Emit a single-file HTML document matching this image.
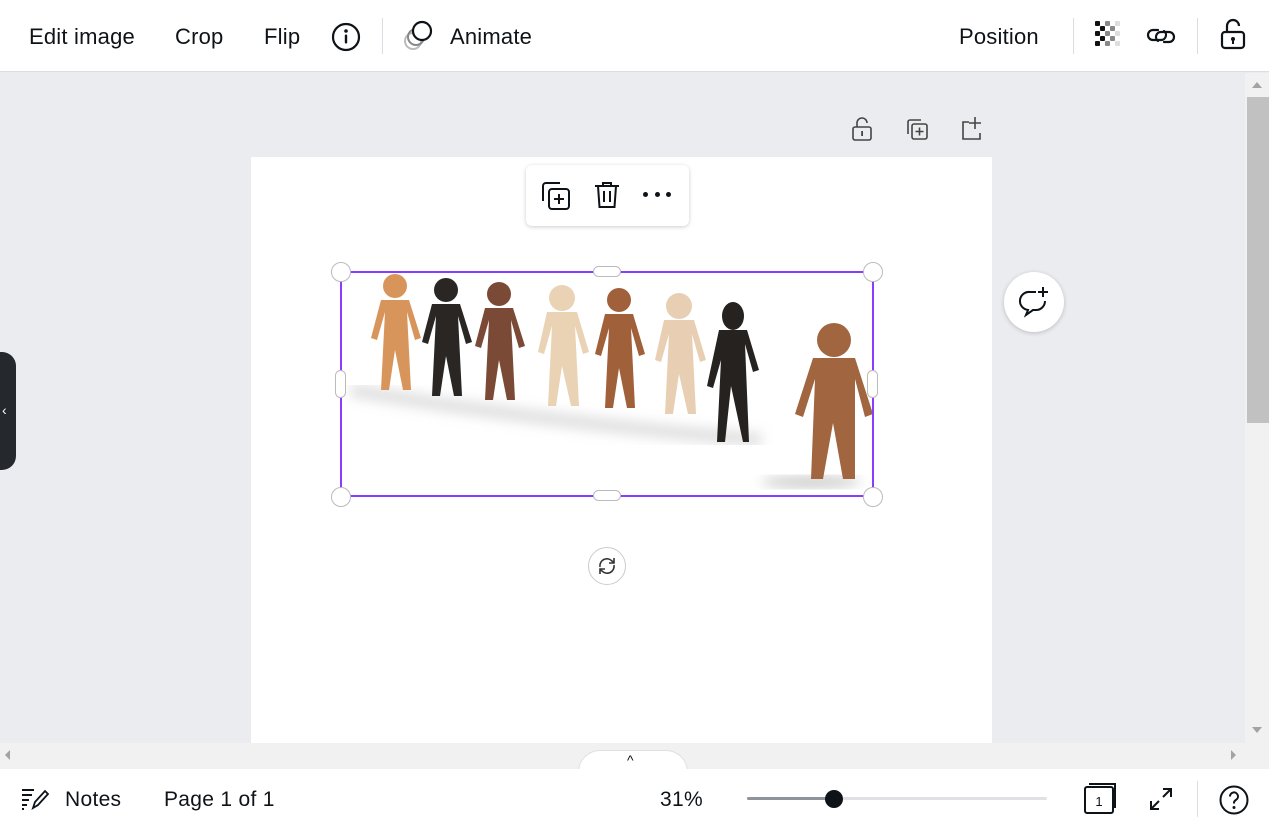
<!DOCTYPE html>
<html><head><meta charset="utf-8"><style>
*{margin:0;padding:0;box-sizing:border-box}
body{width:1269px;height:826px;overflow:hidden;font-family:"Liberation Sans",sans-serif;color:#0e1318;background:#ebecf0;position:relative}
.abs{position:absolute}
.top{left:0;top:0;width:1269px;height:72px;background:#fff;border-bottom:1px solid #dcdde2}
.t{position:absolute;top:24px;font-size:22px;letter-spacing:0.2px}
.sep{position:absolute;width:1px;background:#dcdde2}
.bot{left:0;top:769px;width:1269px;height:57px;background:#fff}
.b{position:absolute;top:788px;font-size:21px;letter-spacing:0.3px}
</style></head><body>
<div class="abs top">
 <div class="t" style="left:29px">Edit image</div>
 <div class="t" style="left:175px">Crop</div>
 <div class="t" style="left:264px">Flip</div>
 <svg class="abs" style="left:330px;top:21px" width="32" height="32" viewBox="0 0 32 32"><circle cx="16" cy="16" r="13" fill="none" stroke="#0e1318" stroke-width="2.2"/><circle cx="16" cy="10" r="1.8" fill="#0e1318"/><rect x="14.8" y="13.5" width="2.4" height="9" rx="1" fill="#0e1318"/></svg>
 <div class="sep" style="left:382px;top:18px;height:36px"></div>
 <svg class="abs" style="left:402px;top:19px" width="36" height="34" viewBox="0 0 36 34"><circle cx="11" cy="22" r="8" fill="none" stroke="#bbb" stroke-width="2"/><circle cx="14" cy="18" r="8" fill="none" stroke="#888" stroke-width="2"/><circle cx="20" cy="12" r="9" fill="#fff" stroke="#0e1318" stroke-width="2.2"/></svg>
 <div class="t" style="left:450px">Animate</div>
 <div class="t" style="left:959px">Position</div>
 <div class="sep" style="left:1073px;top:18px;height:36px"></div>
 <svg class="abs" style="left:1094px;top:20px" width="32" height="32" viewBox="0 0 32 32">
  <g fill="#111"><rect x="1" y="1" width="5" height="5" rx="1"/><rect x="1" y="11" width="5" height="5" rx="1"/><rect x="1" y="21" width="5" height="5" rx="1"/><rect x="6" y="6" width="5" height="5" rx="1"/><rect x="6" y="16" width="5" height="5" rx="1"/></g>
  <g fill="#888"><rect x="11" y="1" width="5" height="5" rx="1"/><rect x="11" y="11" width="5" height="5" rx="1"/><rect x="11" y="21" width="5" height="5" rx="1"/><rect x="16" y="6" width="5" height="5" rx="1"/><rect x="16" y="16" width="5" height="5" rx="1"/></g>
  <g fill="#ddd"><rect x="21" y="1" width="5" height="5" rx="1"/><rect x="21" y="11" width="5" height="5" rx="1"/><rect x="21" y="21" width="5" height="5" rx="1"/></g></svg>
 <svg class="abs" style="left:1145px;top:24px" width="32" height="24" viewBox="0 0 32 24"><path d="M13 6H8a5 5 0 0 0 0 10h8a5 5 0 0 0 3-9" fill="none" stroke="#0e1318" stroke-width="2.2" stroke-linecap="round"/><path d="M19 18h5a5 5 0 0 0 0-10h-8a5 5 0 0 0-3 9" fill="none" stroke="#0e1318" stroke-width="2.2" stroke-linecap="round"/></svg>
 <div class="sep" style="left:1197px;top:18px;height:36px"></div>
 <svg class="abs" style="left:1218px;top:17px" width="30" height="34" viewBox="0 0 30 34"><path d="M9 15V9a6 6 0 0 1 12 0" fill="none" stroke="#0e1318" stroke-width="2.2"/><rect x="4" y="15" width="22" height="16" rx="3" fill="none" stroke="#0e1318" stroke-width="2.2"/><circle cx="15" cy="22" r="2" fill="#0e1318"/><rect x="14" y="22" width="2" height="5" fill="#0e1318"/></svg>
</div>
<div class="abs" style="left:1245px;top:73px;width:24px;height:670px;background:#f1f1f1"></div>
<div class="abs" style="left:1247px;top:97px;width:22px;height:326px;background:#c1c1c1"></div>
<div class="abs" style="left:1252px;top:82px;width:0;height:0;border:5px solid transparent;border-bottom:6px solid #a3a3a3;border-top:0"></div>
<div class="abs" style="left:1252px;top:727px;width:0;height:0;border:5px solid transparent;border-top:6px solid #a3a3a3;border-bottom:0"></div>
<div class="abs" style="left:0;top:743px;width:1269px;height:26px;background:#f1f1f1"></div>
<div class="abs" style="left:5px;top:750px;border:5px solid transparent;border-right:5px solid #a3a3a3;border-left:0"></div>
<div class="abs" style="left:1231px;top:750px;border:5px solid transparent;border-left:5px solid #a3a3a3;border-right:0"></div>
<div class="abs" style="left:578px;top:750px;width:110px;height:22px;background:#fff;border-radius:30px 30px 0 0;border:1px solid #e0e0e0;border-bottom:0"></div>
<div class="abs" style="left:627px;top:752px;font-size:14px">^</div>
<div class="abs" style="left:-14px;top:352px;width:30px;height:118px;background:#25282d;border-radius:14px"></div>
<div class="abs" style="left:2px;top:402px;color:#fff;font-size:14px">‹</div>
<div class="abs" style="left:251px;top:157px;width:741px;height:586px;background:#fff"></div>
<svg class="abs" style="left:850px;top:115px" width="26" height="28" viewBox="0 0 26 28"><path d="M7 12V8a5 5 0 0 1 10 0" fill="none" stroke="#444" stroke-width="1.6"/><rect x="3" y="12" width="18" height="13" rx="2" fill="none" stroke="#444" stroke-width="1.6"/><rect x="11.2" y="16" width="1.8" height="5" fill="#444"/></svg>
<svg class="abs" style="left:904px;top:117px" width="26" height="26" viewBox="0 0 26 26"><path d="M4 17V5a2 2 0 0 1 2-2h11" fill="none" stroke="#444" stroke-width="1.6"/><rect x="8" y="7" width="15" height="15" rx="2" fill="none" stroke="#444" stroke-width="1.6"/><path d="M15.5 10.5v8M11.5 14.5h8" stroke="#444" stroke-width="1.6"/></svg>
<svg class="abs" style="left:958px;top:115px" width="26" height="28" viewBox="0 0 26 28"><path d="M11 7H5v17h17v-6" fill="none" stroke="#444" stroke-width="1.6"/><path d="M17 2v12M11 8h12" stroke="#444" stroke-width="1.6"/></svg>
<div class="abs" style="left:526px;top:165px;width:163px;height:61px;background:#fff;border-radius:6px;box-shadow:0 1px 4px rgba(0,0,0,.2)"></div>
<svg class="abs" style="left:540px;top:180px" width="32" height="32" viewBox="0 0 32 32"><path d="M3 21V6a3 3 0 0 1 3-3h14" fill="none" stroke="#0e1318" stroke-width="2"/><rect x="9" y="9" width="20" height="20" rx="3" fill="none" stroke="#0e1318" stroke-width="2"/><path d="M19 14v10M14 19h10" stroke="#0e1318" stroke-width="2"/></svg>
<svg class="abs" style="left:592px;top:179px" width="30" height="32" viewBox="0 0 30 32"><path d="M3 7h24M11 7V4h8v3" fill="none" stroke="#0e1318" stroke-width="2"/><path d="M6 7l1.5 21h15L24 7" fill="none" stroke="#0e1318" stroke-width="2"/><path d="M12 12v11M18 12v11" stroke="#0e1318" stroke-width="2"/></svg>
<div class="abs" style="left:643px;top:192px;width:28px;display:flex;justify-content:space-between"><i style="width:5px;height:5px;border-radius:50%;background:#0e1318"></i><i style="width:5px;height:5px;border-radius:50%;background:#0e1318"></i><i style="width:5px;height:5px;border-radius:50%;background:#0e1318"></i></div>
<svg class="abs" style="left:341px;top:272px" width="532" height="224" viewBox="0 0 532 224">
 <defs><filter id="bl"><feGaussianBlur stdDeviation="6"/></filter></defs>
 <path d="M10 118 Q200 150 420 168" stroke="#ccc" stroke-width="14" fill="none" filter="url(#bl)" opacity=".6"/>
 <ellipse cx="470" cy="210" rx="50" ry="6" fill="#ccc" filter="url(#bl)"/>
 <g fill="#d8955b"><circle cx="54" cy="14" r="12"/><path d="M40 28h28l12 38-6 2-8-28 4 78h-8l-8-40-6 40h-8l4-78-8 28-6-2z"/></g>
 <g fill="#2a2624"><circle cx="105" cy="18" r="12"/><path d="M91 32h28l12 38-6 2-8-28 4 80h-8l-8-40-6 40h-8l4-80-8 28-6-2z"/></g>
 <g fill="#7b4a36"><circle cx="158" cy="22" r="12"/><path d="M144 36h28l12 38-6 2-8-28 4 80h-8l-8-40-6 40h-8l4-80-8 28-6-2z"/></g>
 <g fill="#ead2b5"><circle cx="221" cy="26" r="13"/><path d="M206 40h30l12 40-6 2-8-28 4 80h-8l-9-40-6 40h-8l4-80-8 28-6-2z"/></g>
 <g fill="#a0603a"><circle cx="278" cy="28" r="12"/><path d="M264 42h28l12 40-6 2-8-28 4 80h-8l-8-40-6 40h-8l4-80-8 28-6-2z"/></g>
 <g fill="#e8cfb3"><circle cx="338" cy="34" r="13"/><path d="M323 48h30l12 40-6 2-8-28 4 80h-8l-9-40-6 40h-8l4-80-8 28-6-2z"/></g>
 <g fill="#25221f"><ellipse cx="392" cy="44" rx="11" ry="14"/><path d="M378 58h28l12 40-6 2-8-28 4 98h-6l-12-56-6 56h-8l4-82-8 28-6-2z"/></g>
 <g fill="#a1653f"><circle cx="493" cy="68" r="17"/><path d="M472 86h42l18 56-8 3-10-38 0 100h-12l-10-56-10 56h-12l4-100-12 38-8-3z"/></g>
</svg>
<div class="abs" style="left:340px;top:271px;width:534px;height:226px;border:2px solid #8b3dff"></div>
<div class="abs" style="left:331px;top:262px;width:20px;height:20px;border-radius:50%;background:#fff;border:1px solid #bbb"></div>
<div class="abs" style="left:863px;top:262px;width:20px;height:20px;border-radius:50%;background:#fff;border:1px solid #bbb"></div>
<div class="abs" style="left:331px;top:487px;width:20px;height:20px;border-radius:50%;background:#fff;border:1px solid #bbb"></div>
<div class="abs" style="left:863px;top:487px;width:20px;height:20px;border-radius:50%;background:#fff;border:1px solid #bbb"></div>
<div class="abs" style="left:593px;top:266px;width:28px;height:11px;border-radius:6px;background:#fff;border:1px solid #bbb"></div>
<div class="abs" style="left:593px;top:490px;width:28px;height:11px;border-radius:6px;background:#fff;border:1px solid #bbb"></div>
<div class="abs" style="left:335px;top:370px;width:11px;height:28px;border-radius:6px;background:#fff;border:1px solid #bbb"></div>
<div class="abs" style="left:867px;top:370px;width:11px;height:28px;border-radius:6px;background:#fff;border:1px solid #bbb"></div>
<div class="abs" style="left:588px;top:547px;width:38px;height:38px;border-radius:50%;background:#fff;border:1px solid #ccc"></div>
<svg class="abs" style="left:596px;top:555px" width="22" height="22" viewBox="0 0 22 22"><path d="M4 12a7 7 0 0 1 12-6l2 2M18 10a7 7 0 0 1-12 6l-2-2" fill="none" stroke="#333" stroke-width="1.6"/><path d="M18 3v5h-5M4 19v-5h5" fill="none" stroke="#333" stroke-width="1.6"/></svg>
<div class="abs" style="left:1004px;top:272px;width:60px;height:60px;border-radius:50%;background:#fff;box-shadow:0 1px 5px rgba(0,0,0,.2)"></div>
<svg class="abs" style="left:1018px;top:285px" width="34" height="34" viewBox="0 0 34 34"><path d="M18 7h-6a9 9 0 0 0-2 18l-2 5 7-5h3a9 9 0 0 0 9-9" fill="none" stroke="#0e1318" stroke-width="2"/><path d="M25 2v10M20 7h10" stroke="#0e1318" stroke-width="2"/></svg>
<div class="abs bot"></div>
<svg class="abs" style="left:21px;top:787px" width="30" height="24" viewBox="0 0 30 24"><path d="M1 3h12M1 8h10M1 13h7M1 18h5M1 22h2" stroke="#0e1318" stroke-width="2"/><path d="M12 21l2-6 10-11 3 3-10 11z" fill="none" stroke="#0e1318" stroke-width="1.8"/></svg>
<div class="b" style="left:65px">Notes</div>
<div class="b" style="left:164px">Page 1 of 1</div>
<div class="b" style="left:660px">31%</div>
<div class="abs" style="left:747px;top:797px;width:300px;height:3px;background:#dfe1e5;border-radius:2px"></div>
<div class="abs" style="left:747px;top:797px;width:86px;height:3px;background:#8f939a;border-radius:2px"></div>
<div class="abs" style="left:825px;top:790px;width:18px;height:18px;border-radius:50%;background:#0e1318"></div>
<svg class="abs" style="left:1083px;top:781px" width="36" height="34" viewBox="0 0 36 34"><rect x="2" y="6" width="28" height="26" rx="2" fill="none" stroke="#0e1318" stroke-width="2"/><path d="M6 3h26v24" fill="none" stroke="#0e1318" stroke-width="2"/><text x="16" y="25" font-size="13" text-anchor="middle" font-family="Liberation Sans" fill="#0e1318">1</text></svg>
<svg class="abs" style="left:1148px;top:786px" width="26" height="26" viewBox="0 0 26 26"><path d="M15 3h8v8M23 3l-8 8M11 23H3v-8M3 23l8-8" fill="none" stroke="#0e1318" stroke-width="2"/></svg>
<div class="sep" style="left:1197px;top:781px;height:36px"></div>
<svg class="abs" style="left:1218px;top:784px" width="32" height="32" viewBox="0 0 32 32"><circle cx="16" cy="16" r="13.5" fill="none" stroke="#0e1318" stroke-width="2"/><path d="M12 12.5a4 4 0 1 1 6 3.4c-1.3.8-2 1.6-2 3.1v.5" fill="none" stroke="#0e1318" stroke-width="2"/><circle cx="16" cy="23.5" r="1.5" fill="#0e1318"/></svg>
</body></html>
